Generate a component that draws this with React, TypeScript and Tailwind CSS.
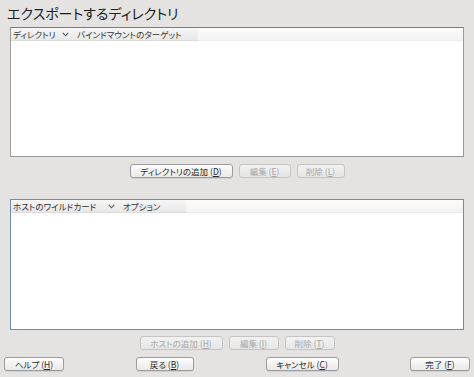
import React from 'react';

const jp = "font-['Noto_Sans_CJK_JP','Noto_Sans',sans-serif] [font-feature-settings:'palt']";

interface BtnProps {
    label: string;
    mnemonic: string;
    width: string;
    disabled?: boolean;
}

const Btn = ({ label, mnemonic, width, disabled }: BtnProps) => (
    <div
        className={`${width} h-[14px] flex items-center justify-center rounded-[3px] border text-[8.5px] leading-none ${
            disabled
                ? 'border-[#c4c4c4] bg-gradient-to-b from-[#f2f2f2] to-[#e6e6e6] text-[#a8a8a8]'
                : 'border-[#9c9c9c] bg-gradient-to-b from-[#fdfdfd] to-[#e9e9e9] text-[#2a2a2a] shadow-[0_1px_0_rgba(0,0,0,0.08)]'
        }`}
    >
        <span>
            {label} (<span className="underline underline-offset-1">{mnemonic}</span>)
        </span>
    </div>
);

const Chevron = () => (
    <svg width="7" height="5" viewBox="0 0 7 5" className="shrink-0">
        <path d="M0.8 0.8 L3.5 3.8 L6.2 0.8" fill="none" stroke="#555" strokeWidth="1.1" />
    </svg>
);

interface TableProps {
    col1: string;
    col2: string;
    col1Width: string;
    headWidth: string;
    focused?: boolean;
    height: string;
}

const Table = ({ col1, col2, col1Width, headWidth, focused, height }: TableProps) => (
    <div
        className={`mx-[10px] ${height} bg-white flex flex-col ${
            focused ? 'border-[1.5px] border-[#6f8db4]' : 'border border-[#9a9a9a] border-t-[#7d7d7d]'
        }`}
    >
        <div className="flex h-[13px] shrink-0">
            <div className={`${headWidth} flex items-center bg-gradient-to-b from-[#f6f6f6] to-[#e8e8e8] border-b border-[#dcdcdc] text-[8.5px] text-[#333] leading-none`}>
                <div className={`${col1Width} flex items-center justify-between pl-[2px] pr-[4px]`}>
                    <span>{col1}</span>
                    <Chevron />
                </div>
                <span className="pl-[4px]">{col2}</span>
            </div>
            <div className="flex-1 bg-gradient-to-b from-[#fbfbfb] to-[#f3f3f3] border-b border-[#ececec]" />
        </div>
    </div>
);

export default function App() {
    return (
        <div className={`w-[474px] h-[377px] bg-[#e4e3e2] flex flex-col ${jp}`}>
            <div className="h-[27px] pl-[7px] pt-[3px] text-[14px] leading-[20px] text-[#1e1e1e]">エクスポートするディレクトリ</div>
            <Table col1="ディレクトリ" col2="バインドマウントのターゲット" col1Width="w-[62px]" headWidth="w-[187px]" height="h-[130px]" />
            <div className="flex justify-center gap-[6px] mt-[7px]">
                <Btn label="ディレクトリの追加" mnemonic="D" width="w-[103px]" />
                <Btn label="編集" mnemonic="E" width="w-[52px]" disabled />
                <Btn label="削除" mnemonic="L" width="w-[48px]" disabled />
            </div>
            <div className="h-[21px]" />
            <Table col1="ホストのワイルドカード" col2="オプション" col1Width="w-[108px]" headWidth="w-[175px]" height="h-[131px]" focused />
            <div className="flex justify-center gap-[6px] mt-[6px]">
                <Btn label="ホストの追加" mnemonic="H" width="w-[83px]" disabled />
                <Btn label="編集" mnemonic="I" width="w-[50px]" disabled />
                <Btn label="削除" mnemonic="T" width="w-[50px]" disabled />
            </div>
            <div className="flex items-center px-[4px] mt-[7px]">
                <div className="flex-1 flex">
                    <Btn label="ヘルプ" mnemonic="H" width="w-[60px]" />
                </div>
                <div className="flex gap-[72px]">
                    <Btn label="戻る" mnemonic="B" width="w-[58px]" />
                    <Btn label="キャンセル" mnemonic="C" width="w-[73px]" />
                </div>
                <div className="flex-1 flex justify-end">
                    <Btn label="完了" mnemonic="F" width="w-[60px]" />
                </div>
            </div>
        </div>
    );
}
